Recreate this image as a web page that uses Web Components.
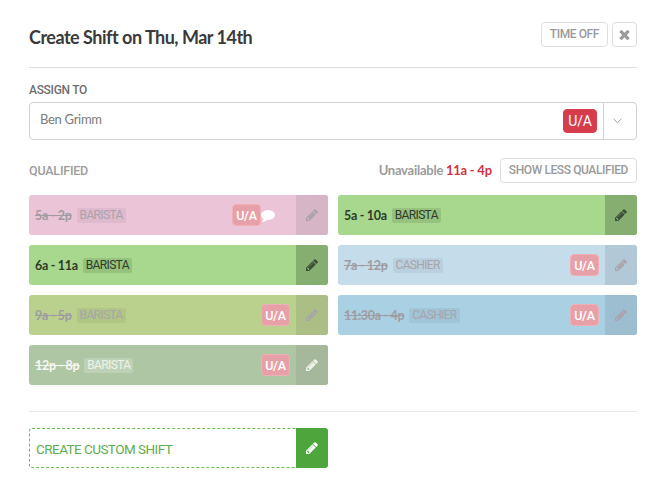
<!DOCTYPE html>
<html>
<head>
<meta charset="utf-8">
<title>Create Shift</title>
<style>
  html, body { margin: 0; background: #fff; }
  body { font-family: Lato, "Liberation Sans", sans-serif; color: #3b3b3b; }
</style>
</head>
<body>
<shift-modal></shift-modal>

<script>
const PENCIL = 'M491 1536l91-91-235-235-91 91v107h128v128h107zm523-928q0-22-22-22-10 0-17 7l-542 542q-7 7-7 17 0 22 22 22 10 0 17-7l542-542q7-7 7-17zm-54-192l416 416-832 832h-416v-416zm683 96q0 53-37 90l-166 166-416-416 166-165q36-38 90-38 53 0 91 38l235 234q37 39 37 91z';
const TIMES = 'M1490 1322q0 40-28 68l-136 136q-28 28-68 28t-68-28l-294-294-294 294q-28 28-68 28t-68-28l-136-136q-28-28-28-68t28-68l294-294-294-294q-28-28-28-68t28-68l136-136q28-28 68-28t68 28l294 294 294-294q28-28 68-28t68 28l136 136q28 28 28 68t-28 68l-294 294 294 294q28 28 28 68z';
const COMMENT = 'M1792 896q0 174-120 321.5t-326 233-450 85.5q-70 0-145-8-198 175-460 242-49 14-114 22-17 2-30.5-9t-17.5-29v-1q-3-4-.5-12t2-10 4.5-9.5l6-9 7-8.5 8-9q7-8 31-34.5t34.5-38 31-39.5 32.5-51 27-59 26-76q-157-89-247.5-220t-90.5-281q0-130 71-248.5t191-204.5 286-136.5 348-50.5q244 0 450 85.5t326 233 120 321.5z';

function icon(d, size, fill) {
  return `<svg width="${size}" height="${size}" viewBox="0 0 1792 1792" fill="${fill}"><path d="${d}"/></svg>`;
}

class UaBadge extends HTMLElement {
  constructor() {
    super();
    this.attachShadow({ mode: 'open' });
    this.shadowRoot.innerHTML = `
      <style>
        :host {
          display: inline-flex;
          align-items: center;
          justify-content: center;
          box-sizing: border-box;
          width: 29px;
          height: 22px;
          border-radius: 4px;
          border: 1px solid #eeb0b6;
          background: #e8a0a8;
          color: #fff;
          font-family: Roboto, sans-serif;
          font-size: 12.5px;
          font-weight: 500;
          letter-spacing: -0.2px;
        }
        :host([solid]) {
          width: 34px;
          height: 24px;
          border-color: #d8404f;
          background: #d63c4c;
          font-size: 14px;
          font-weight: 400;
        }
      </style>
      <span>U/A</span>
    `;
  }
}
customElements.define('ua-badge', UaBadge);

class OutlineButton extends HTMLElement {
  constructor() {
    super();
    this.attachShadow({ mode: 'open' });
    this.shadowRoot.innerHTML = `
      <style>
        :host {
          display: inline-flex;
          align-items: center;
          justify-content: center;
          box-sizing: border-box;
          height: 25px;
          padding: 0 8px;
          border: 1px solid #dedede;
          border-radius: 4px;
          background: #fff;
          color: #9a9a9a;
          font-family: Roboto, sans-serif;
          font-size: 12px;
          font-weight: 500;
          letter-spacing: -0.4px;
        }
      </style>
      <slot></slot>
    `;
  }
}
customElements.define('outline-button', OutlineButton);

class ShiftCard extends HTMLElement {
  constructor() {
    super();
    this.attachShadow({ mode: 'open' });
  }

  connectedCallback() {
    const time = this.getAttribute('time');
    const role = this.getAttribute('role-name');
    const bg = this.getAttribute('bg');
    const edit = this.getAttribute('edit');
    const ua = this.hasAttribute('ua');
    const note = this.hasAttribute('note');
    const tone = this.getAttribute('tone') || 'dim';
    const tones = {
      on: { text: '#2f3b2a', tag: '#2f3b2a', tagBg: 'rgba(0,0,0,.1)', pen: '#3f4f38' },
      dim: { text: '#a09ca2', tag: '#a8a4aa', tagBg: 'rgba(0,0,0,.05)', pen: '#a8a4aa' },
      light: { text: '#f4f7f2', tag: '#eef3ea', tagBg: 'rgba(255,255,255,.2)', pen: '#eef3ea' }
    }[tone];

    this.shadowRoot.innerHTML = `
      <style>
        :host {
          display: flex;
          height: 40px;
          border-radius: 3px;
          overflow: hidden;
          background: ${bg};
          font-size: 12.5px;
        }
        .body {
          flex: 1;
          display: flex;
          align-items: center;
          gap: 5px;
          padding: 0 6px;
          min-width: 0;
        }
        .time {
          color: ${tones.text};
          font-weight: 700;
          letter-spacing: -0.3px;
          text-decoration: ${tone === 'on' ? 'none' : 'line-through'};
        }
        .tag {
          color: ${tones.tag};
          background: ${tones.tagBg};
          border-radius: 2px;
          padding: 0 3px;
          height: 15px;
          line-height: 15px;
          font-family: Roboto, sans-serif;
          font-size: 12px;
          letter-spacing: -0.65px;
        }
        .right {
          margin-left: auto;
          display: flex;
          align-items: center;
        }
        .note { display: flex; margin-right: 15px; }
        .edit {
          flex: none;
          width: 32px;
          display: flex;
          align-items: center;
          justify-content: center;
          background: ${edit};
        }
        svg { display: block; }
      </style>
      <div class="body">
        <span class="time">${time}</span>
        <span class="tag">${role}</span>
        <div class="right">
          ${ua ? '<ua-badge></ua-badge>' : ''}
          ${note ? `<span class="note">${icon(COMMENT, 14, '#fff')}</span>` : ''}
        </div>
      </div>
      <div class="edit">${icon(PENCIL, 14, tones.pen)}</div>
    `;
  }
}
customElements.define('shift-card', ShiftCard);

class AssignSelect extends HTMLElement {
  constructor() {
    super();
    this.attachShadow({ mode: 'open' });
    this.shadowRoot.innerHTML = `
      <style>
        :host {
          display: flex;
          box-sizing: border-box;
          height: 38px;
          border: 1px solid #d2d2d2;
          border-radius: 4px;
          background: #fff;
        }
        .value {
          flex: 1;
          display: flex;
          align-items: center;
          padding: 0 6px 0 10px;
          color: #7b7b7b;
          font-size: 13px;
          letter-spacing: -0.3px;
        }
        .value span { margin-bottom: 4px; }
        ua-badge { margin-left: auto; }
        .caret {
          flex: none;
          width: 26px;
          border-left: 1px solid #d2d2d2;
          display: flex;
          align-items: center;
          justify-content: center;
          padding-right: 6px;
        }
      </style>
      <div class="value"><span><slot></slot></span><ua-badge solid></ua-badge></div>
      <div class="caret">
        <svg width="9" height="6" viewBox="0 0 9 6" fill="none" stroke="#9a9a9a" stroke-width="1"><path d="M.7 1l3.8 3.7L8.3 1"/></svg>
      </div>
    `;
  }
}
customElements.define('assign-select', AssignSelect);

class CustomShift extends HTMLElement {
  constructor() {
    super();
    this.attachShadow({ mode: 'open' });
    this.shadowRoot.innerHTML = `
      <style>
        :host { display: flex; height: 40px; }
        .label {
          flex: 1;
          box-sizing: border-box;
          display: flex;
          align-items: center;
          padding: 2px 0 0 6px;
          border: 1px dashed #6fbb5c;
          border-right: none;
          border-radius: 3px 0 0 3px;
          color: #62ad50;
          font-family: Roboto, sans-serif;
          font-size: 13.5px;
          letter-spacing: -0.55px;
        }
        .edit {
          flex: none;
          width: 32px;
          display: flex;
          align-items: center;
          justify-content: center;
          background: #4ea53c;
          border-radius: 0 3px 3px 0;
        }
        svg { display: block; }
      </style>
      <div class="label"><slot></slot></div>
      <div class="edit">${icon(PENCIL, 14, '#fff')}</div>
    `;
  }
}
customElements.define('custom-shift', CustomShift);

class ShiftModal extends HTMLElement {
  constructor() {
    super();
    this.attachShadow({ mode: 'open' });
    this.shadowRoot.innerHTML = `
      <style>
        :host {
          display: block;
          box-sizing: border-box;
          width: 665px;
          height: 492px;
          padding: 0 28px 0 29px;
          overflow: hidden;
        }
        header {
          display: flex;
          align-items: center;
          justify-content: space-between;
          box-sizing: border-box;
          height: 68px;
          border-bottom: 1px solid #dcdcdc;
          padding-bottom: 1px;
          margin-bottom: 14px;
        }
        h1 {
          margin: 0;
          font-size: 18px;
          font-weight: 700;
          letter-spacing: -0.5px;
          color: #3a3a3a;
          position: relative;
          top: 4px;
        }
        .actions { display: flex; gap: 4px; position: relative; top: 1px; }
        .close { padding: 0; width: 25px; }
        .label {
          font-family: Roboto, sans-serif;
          font-size: 12px;
          font-weight: 500;
          letter-spacing: -0.3px;
          color: #6f6f6f;
          height: 20px;
          line-height: 16px;
        }
        .qual-row {
          display: flex;
          align-items: center;
          height: 26px;
          margin: 17px 0 12px;
        }
        .qual {
          color: #9c9c9c;
          font-family: Roboto, sans-serif;
          font-size: 12.5px;
          font-weight: 500;
          letter-spacing: -0.2px;
        }
        .unavail {
          margin-left: auto;
          margin-right: 8px;
          color: #9c9c9c;
          font-size: 13px;
          font-weight: 700;
          letter-spacing: -0.25px;
        }
        .unavail b { color: #d0333f; font-weight: 700; }
        .grid {
          display: grid;
          grid-template-columns: 1fr 1fr;
          gap: 10px;
        }
        hr {
          border: none;
          border-top: 1px solid #e8e8e8;
          margin: 26px 0 16px;
        }
        custom-shift { width: 299px; }
      </style>
      <header>
        <h1>Create Shift on Thu, Mar 14th</h1>
        <div class="actions">
          <outline-button>TIME OFF</outline-button>
          <outline-button class="close">${icon(TIMES, 15, '#9a9a9a')}</outline-button>
        </div>
      </header>
      <div class="label">ASSIGN TO</div>
      <assign-select>Ben Grimm</assign-select>
      <div class="qual-row">
        <span class="qual">QUALIFIED</span>
        <span class="unavail">Unavailable <b>11a - 4p</b></span>
        <outline-button>SHOW LESS QUALIFIED</outline-button>
      </div>
      <div class="grid">
        <shift-card time="5a - 2p" role-name="BARISTA" bg="#ebc4d8" edit="#d6b5c6" ua note></shift-card>
        <shift-card time="5a - 10a" role-name="BARISTA" bg="#a7d88d" edit="#85ae70" tone="on"></shift-card>
        <shift-card time="6a - 11a" role-name="BARISTA" bg="#a7d88d" edit="#85ae70" tone="on"></shift-card>
        <shift-card time="7a - 12p" role-name="CASHIER" bg="#c5dcea" edit="#b3c8d6" ua></shift-card>
        <shift-card time="9a - 5p" role-name="BARISTA" bg="#b9d18c" edit="#abbf85" ua></shift-card>
        <shift-card time="11:30a - 4p" role-name="CASHIER" bg="#a9d0e3" edit="#9dbdd1" ua></shift-card>
        <shift-card time="12p - 8p" role-name="BARISTA" bg="#aec6a4" edit="#a6b89c" tone="light" ua></shift-card>
      </div>
      <hr>
      <custom-shift>CREATE CUSTOM SHIFT</custom-shift>
    `;
  }
}
customElements.define('shift-modal', ShiftModal);
</script>
</body>
</html>
